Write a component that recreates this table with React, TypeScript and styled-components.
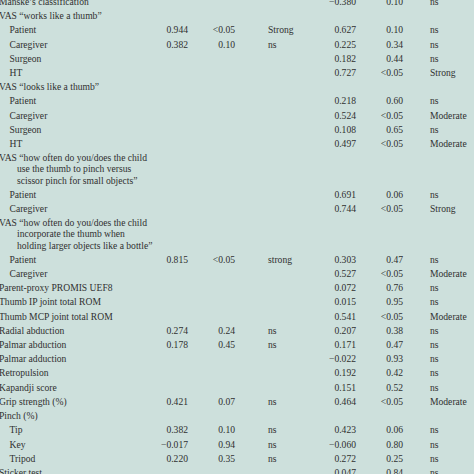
import React from "react";
import styled, { createGlobalStyle } from "styled-components";

const Global = createGlobalStyle`
  html, body {
    margin: 0;
    padding: 0;
    background: #cde0dc;
    overflow: hidden;
  }
  body {
    width: 474px;
    height: 474px;
  }
`;

const Page = styled.div`
  width: 474px;
  height: 474px;
  overflow: hidden;
  background: #cde0dc;
`;

const Table = styled.div`
  margin-top: -5.5px;
  margin-left: -1px;
  display: flex;
  flex-direction: column;
  font-family: "Liberation Serif", "Times New Roman", serif;
  font-size: 9.6px;
  line-height: 11.2px;
  color: #303030;
`;

const Row = styled.div`
  display: grid;
  grid-template-columns: 161px 28px 47px 65px 56px 47px 71px;
  padding: 1.5px 0;
  white-space: nowrap;
`;

const Label = styled.div<{ $level: number }>`
  padding-left: ${(p) => (p.$level === 1 ? 10.5 : 0)}px;
  display: flex;
  flex-direction: column;
`;

const Line = styled.span<{ $cont?: boolean }>`
  padding-left: ${(p) => (p.$cont ? 18 : 0)}px;
`;

const Num = styled.div`
  text-align: right;
`;

const Word = styled.div<{ $pad: number }>`
  padding-left: ${(p) => p.$pad}px;
`;

type R = {
  label: string[];
  level: number;
  v?: [string, string, string, string, string, string];
};

const rows: R[] = [
  { label: ["Manske’s classification"], level: 0, v: ["", "", "", "−0.380", "0.10", "ns"] },
  { label: ["VAS “works like a thumb”"], level: 0 },
  { label: ["Patient"], level: 1, v: ["0.944", "<0.05", "Strong", "0.627", "0.10", "ns"] },
  { label: ["Caregiver"], level: 1, v: ["0.382", "0.10", "ns", "0.225", "0.34", "ns"] },
  { label: ["Surgeon"], level: 1, v: ["", "", "", "0.182", "0.44", "ns"] },
  { label: ["HT"], level: 1, v: ["", "", "", "0.727", "<0.05", "Strong"] },
  { label: ["VAS “looks like a thumb”"], level: 0 },
  { label: ["Patient"], level: 1, v: ["", "", "", "0.218", "0.60", "ns"] },
  { label: ["Caregiver"], level: 1, v: ["", "", "", "0.524", "<0.05", "Moderate"] },
  { label: ["Surgeon"], level: 1, v: ["", "", "", "0.108", "0.65", "ns"] },
  { label: ["HT"], level: 1, v: ["", "", "", "0.497", "<0.05", "Moderate"] },
  {
    label: [
      "VAS “how often do you/does the child",
      "use the thumb to pinch versus",
      "scissor pinch for small objects”",
    ],
    level: 0,
  },
  { label: ["Patient"], level: 1, v: ["", "", "", "0.691", "0.06", "ns"] },
  { label: ["Caregiver"], level: 1, v: ["", "", "", "0.744", "<0.05", "Strong"] },
  {
    label: [
      "VAS “how often do you/does the child",
      "incorporate the thumb when",
      "holding larger objects like a bottle”",
    ],
    level: 0,
  },
  { label: ["Patient"], level: 1, v: ["0.815", "<0.05", "strong", "0.303", "0.47", "ns"] },
  { label: ["Caregiver"], level: 1, v: ["", "", "", "0.527", "<0.05", "Moderate"] },
  { label: ["Parent-proxy PROMIS UEF8"], level: 0, v: ["", "", "", "0.072", "0.76", "ns"] },
  { label: ["Thumb IP joint total ROM"], level: 0, v: ["", "", "", "0.015", "0.95", "ns"] },
  { label: ["Thumb MCP joint total ROM"], level: 0, v: ["", "", "", "0.541", "<0.05", "Moderate"] },
  { label: ["Radial abduction"], level: 0, v: ["0.274", "0.24", "ns", "0.207", "0.38", "ns"] },
  { label: ["Palmar abduction"], level: 0, v: ["0.178", "0.45", "ns", "0.171", "0.47", "ns"] },
  { label: ["Palmar adduction"], level: 0, v: ["", "", "", "−0.022", "0.93", "ns"] },
  { label: ["Retropulsion"], level: 0, v: ["", "", "", "0.192", "0.42", "ns"] },
  { label: ["Kapandji score"], level: 0, v: ["", "", "", "0.151", "0.52", "ns"] },
  { label: ["Grip strength (%)"], level: 0, v: ["0.421", "0.07", "ns", "0.464", "<0.05", "Moderate"] },
  { label: ["Pinch (%)"], level: 0 },
  { label: ["Tip"], level: 1, v: ["0.382", "0.10", "ns", "0.423", "0.06", "ns"] },
  { label: ["Key"], level: 1, v: ["−0.017", "0.94", "ns", "−0.060", "0.80", "ns"] },
  { label: ["Tripod"], level: 1, v: ["0.220", "0.35", "ns", "0.272", "0.25", "ns"] },
  { label: ["Sticker test"], level: 0, v: ["", "", "", "0.047", "0.84", "ns"] },
];

export default function App() {
  return (
    <Page>
      <Global />
      <Table>
        {rows.map((r, i) => {
          const v = r.v ?? ["", "", "", "", "", ""];
          return (
            <Row key={i}>
              <Label $level={r.level}>
                {r.label.map((l, j) => (
                  <Line key={j} $cont={j > 0}>
                    {l}
                  </Line>
                ))}
              </Label>
              <Num>{v[0]}</Num>
              <Num>{v[1]}</Num>
              <Word $pad={33}>{v[2]}</Word>
              <Num>{v[3]}</Num>
              <Num>{v[4]}</Num>
              <Word $pad={27}>{v[5]}</Word>
            </Row>
          );
        })}
      </Table>
    </Page>
  );
}
